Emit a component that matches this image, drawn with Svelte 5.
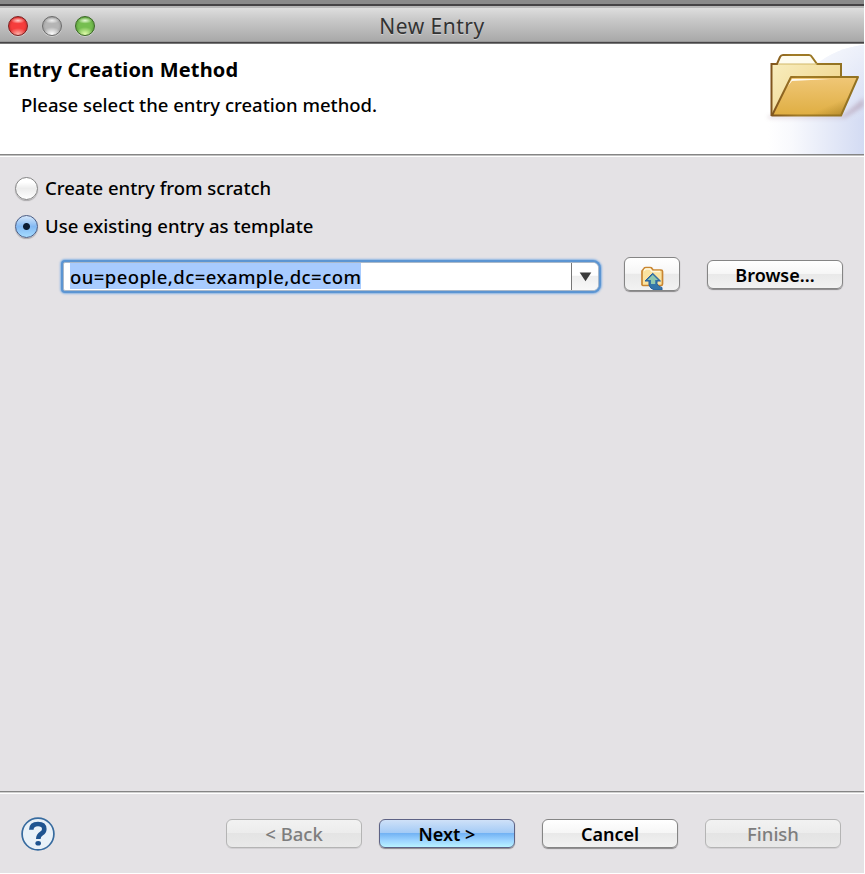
<script>
  let method = 'template';
  let template = 'ou=people,dc=example,dc=com';

  const lights = ['red', 'grey', 'green'];

  const actions = [
    { label: '< Back', state: 'disabled', gap: 17 },
    { label: 'Next >', state: 'primary', gap: 27 },
    { label: 'Cancel', state: '', gap: 27 },
    { label: 'Finish', state: 'disabled', gap: 0 }
  ];
</script>

<div class="window">
  <div class="titlebar">
    <div class="lights">
      {#each lights as color}
        <i class={color}></i>
      {/each}
    </div>
    <span class="title">New Entry</span>
  </div>

  <header>
    <div class="intro">
      <h1>Entry Creation Method</h1>
      <p>Please select the entry creation method.</p>
    </div>
    <svg class="banner" width="124" height="110" viewBox="740 44 124 110">
      <defs>
        <linearGradient id="sky" x1="0" x2="1">
          <stop offset="0" stop-color="#fff" />
          <stop offset=".25" stop-color="#f8f9fd" />
          <stop offset="1" stop-color="#d3dbf3" />
        </linearGradient>
        <linearGradient id="fade" x1="0" y1="0" x2="0" y2="1">
          <stop offset="0" stop-color="#fff" stop-opacity=".6" />
          <stop offset=".7" stop-color="#fff" stop-opacity="0" />
        </linearGradient>
        <linearGradient id="back" x1="0" y1="0" x2="1" y2="1">
          <stop offset="0" stop-color="#f8efc2" />
          <stop offset="1" stop-color="#efd081" />
        </linearGradient>
        <linearGradient id="front" x1="0" y1="0" x2="0" y2="1">
          <stop offset="0" stop-color="#f0c777" />
          <stop offset="1" stop-color="#dfae42" />
        </linearGradient>
        <linearGradient id="corner" x1="0" y1="0" x2="1" y2="1">
          <stop offset=".7" stop-color="#9b771f" stop-opacity="0" />
          <stop offset="1" stop-color="#8a681c" stop-opacity=".75" />
        </linearGradient>
        <linearGradient id="edge" x1="0" y1="0" x2="1" y2="0">
          <stop offset="0" stop-color="#80551e" />
          <stop offset=".3" stop-color="#a17b25" />
          <stop offset="1" stop-color="#927222" />
        </linearGradient>
        <filter id="soft" x="-20%" y="-50%" width="140%" height="200%"><feGaussianBlur stdDeviation="2" /></filter>
      </defs>
      <path d="M768 154V116L814 66Q836 48 864 45V154Z" fill="url(#sky)" />
      <path d="M768 154V116L814 66Q836 48 864 45V154Z" fill="url(#fade)" />
      <path d="M768 116H842L864 98V106L845 118H768Z" fill="#9c788e" opacity=".4" filter="url(#soft)" />
      <path d="M771.500 116V64H777L780 57Q781 55 783 55H809Q811 55 812 57L817 64H841V77" fill="url(#back)" />
      <path d="M777 64L780 57Q781 55 783 55H809Q811 55 812 57L817 64Z" fill="#fefcef" />
      <path d="M771.500 116V64H777L780 57Q781 55 783 55H809Q811 55 812 57L817 64H841V77" fill="none" stroke="url(#edge)" stroke-width="2" />
      <path d="M778 64H817" stroke="#d2b869" stroke-width="1" />
      <path d="M791 77H858L841 115.500H772Z" fill="url(#front)" />
      <path d="M791 77H858L841 115.500H772Z" fill="url(#corner)" />
      <path d="M787 87L792 79H830L792 81Z" fill="#fff" opacity=".9" />
      <path d="M791 77H858L841 115.500H772Z" fill="none" stroke="url(#edge)" stroke-width="2" stroke-linejoin="round" />
    </svg>
  </header>

  <main>
    <label class="option">
      <span class="radio" class:on={method === 'scratch'}></span>
      <span>Create entry from scratch</span>
    </label>
    <label class="option">
      <span class="radio" class:on={method === 'template'}></span>
      <span>Use existing entry as template</span>
    </label>
    <div class="picker">
      <div class="combo">
        <div class="value"><mark>{template}</mark></div>
        <div class="arrow">
          <svg width="13" height="10" viewBox="0 0 13 10"><path d="M.7.5h11.600L6.500 9.300z" fill="#3b3b3b" /></svg>
        </div>
      </div>
      <button class="up" aria-label="Parent">
        <svg width="24" height="24" viewBox="0 0 24 24">
          <path d="M2 19V5L4 2.500Q4.500 1.500 6 1.500H10Q11.500 1.500 12 2.500L13 4H21Q22.500 4 22.500 5.500V18Q22.500 19.500 21 19.500H3Q2 19.500 2 18Z" fill="#fbe3a0" stroke="#c98632" stroke-width="1.700" />
          <path d="M4 5Q5 3 6 3H10L12 5.500H20" fill="none" stroke="#fff8df" stroke-width="1.500" />
          <path d="M12.700 7.300L20.500 15H17V17.500Q17.500 20.500 22 21.500V24H15Q10 23 9 19V15H5Z" fill="#3476aa" stroke="#275f9d" stroke-width="1" />
          <path d="M12.700 8.700L18 14H15.200V18H11V14H7.500Z" fill="#8fc7ad" />
        </svg>
      </button>
      <button>Browse...</button>
    </div>
  </main>

  <footer>
    <svg class="help" width="34" height="34" viewBox="0 0 34 34">
      <circle cx="17" cy="17" r="15.900" fill="#e9f1f8" stroke="#376b9f" stroke-width="1.700" />
      <path d="M10.300 12.800Q10.300 7 17 7Q23.300 7 23.300 12Q23.300 14.800 20.500 16.500Q17.300 18.500 17.300 22" fill="none" stroke="#1f5490" stroke-width="4.600" />
      <ellipse cx="17.200" cy="26.300" rx="2.800" ry="2.300" fill="#1f5490" />
    </svg>
    <div class="actions">
      {#each actions as action}
        <button class={action.state} disabled={action.state === 'disabled'} style="margin-right: {action.gap}px">{action.label}</button>
      {/each}
    </div>
  </footer>
</div>

<style>
  :global(body) {
    margin: 0;
    background: #fff;
  }
  .window {
    box-sizing: border-box;
    width: 864px;
    height: 873px;
    display: flex;
    flex-direction: column;
    background: #e4e2e5;
    color: #000;
    font: 500 18.500px/24px "Noto Sans", sans-serif;
    white-space: nowrap;
  }
  .titlebar {
    box-sizing: border-box;
    height: 44px;
    flex: none;
    display: grid;
    grid-template-columns: 100px 1fr 100px;
    align-items: center;
    padding-top: 8px;
    background: linear-gradient(#8a8a8a 0 4px, #454345 4px 6px, #b8b8b8 6px 8px, #dedede 8px, #c8c8c8 20px, #a9a9a9 41px, #858585 42px, #464446 42px 43px, #777 43px);
  }
  .lights {
    display: flex;
    gap: 13.500px;
    padding-left: 8px;
  }
  i {
    box-sizing: border-box;
    width: 20px;
    height: 20px;
    border-radius: 50%;
    box-shadow: 0 1px 0 rgba(255, 255, 255, .4);
  }
  .red {
    border: 1px solid #7c2020;
    background: radial-gradient(ellipse 7px 3px at 50% 20%, #ffd0cc, transparent), radial-gradient(ellipse 9px 6px at 50% 95%, #ffb0a8, transparent), radial-gradient(circle, #f63d3c 50%, #a92422);
  }
  .grey {
    border: 1px solid #6b6b6b;
    background: radial-gradient(ellipse 7px 3px at 50% 20%, #eee, transparent), radial-gradient(ellipse 9px 7px at 50% 95%, #fff, transparent), radial-gradient(circle, #b5b5b5 50%, #888);
  }
  .green {
    border: 1px solid #3b6826;
    background: radial-gradient(ellipse 7px 3px at 50% 20%, #e5f8d6, transparent), radial-gradient(ellipse 9px 7px at 50% 95%, #e4ffad, transparent), radial-gradient(circle, #75be50 50%, #447f2a);
  }
  .title {
    justify-self: center;
    font-size: 21px;
    font-weight: 400;
    letter-spacing: .5px;
    color: #333;
    text-shadow: 0 1px 0 rgba(255, 255, 255, .4);
  }
  header {
    height: 110px;
    flex: none;
    display: flex;
    justify-content: space-between;
    background: #fff;
    border-bottom: 1px solid #858585;
    box-shadow: 0 1px 0 #c0c0c0, 0 2px 0 #fff;
  }
  .intro {
    padding: 14px 0 0 8px;
  }
  h1 {
    margin: 0;
    font-size: 20px;
    line-height: 24px;
    font-weight: 700;
    letter-spacing: .17px;
  }
  p {
    margin: 11px 0 0 13px;
  }
  main {
    flex: 1;
    padding: 21px 0 0 15px;
  }
  .option {
    display: flex;
    align-items: center;
    height: 24px;
    margin-bottom: 14px;
    gap: 7px;
  }
  .radio {
    box-sizing: border-box;
    width: 23px;
    height: 23px;
    border: 1px solid #858585;
    border-radius: 50%;
    background: linear-gradient(#fff 20%, #ececec 50%, #fff);
    box-shadow: 0 1px 1px rgba(0, 0, 0, .25);
  }
  .radio.on {
    border-color: #4b5c83;
    background: radial-gradient(circle, #0a1c33 3px, transparent 4px), linear-gradient(#d6e8fb, #83b9f3 50%, #a5dcff);
  }
  .picker {
    display: flex;
    align-items: flex-start;
    padding: 8px 0 0 48px;
  }
  .combo {
    box-sizing: border-box;
    width: 536px;
    height: 29px;
    margin-top: 2px;
    display: flex;
    border-radius: 2px 6px 6px 2px;
    background: #fff;
    box-shadow: 0 0 0 2px #5c95d2, 0 0 2px 3px #8ab4e3;
    border: 1px solid #aab9ca;
  }
  .value {
    flex: 1;
    padding: 0 0 0 6px;
  }
  mark {
    display: inline-block;
    height: 26px;
    line-height: 27px;
    letter-spacing: .43px;
    background: #a8cbfe;
    color: #000;
  }
  .arrow {
    width: 26px;
    display: flex;
    align-items: center;
    justify-content: center;
    border-left: 1px solid #777;
    background: linear-gradient(#fff 45%, #efefef 50%, #f8f8f8);
    border-radius: 0 5px 5px 0;
  }
  button {
    box-sizing: border-box;
    width: 136px;
    height: 29px;
    padding: 0;
    border: 1px solid #858585;
    border-radius: 6px;
    background: linear-gradient(#fff, #f6f6f6 48%, #e9e9e9 50%, #f2f2f2);
    box-shadow: 0 1px 1px rgba(0, 0, 0, .4);
    color: #000;
    font: 600 18px/26px "Noto Sans", sans-serif;
  }
  .up {
    width: 56px;
    height: 34px;
    margin: -3px 27px 0 25px;
    display: flex;
    align-items: flex-end;
    justify-content: center;
  }
  .disabled {
    border-color: #b4b4b4;
    background: linear-gradient(#f2f2f2, #ececec 48%, #e4e4e4 50%, #e9e9e9);
    box-shadow: 0 1px 0 rgba(0, 0, 0, .08);
    color: #7d7d7d;
    font-weight: 500;
    font-size: 18.500px;
  }
  .primary {
    border-color: #5d6285;
    background: linear-gradient(#cfe1f8, #a4cbf6 47%, #73b3f4 50%, #9bd3ff 75%, #b8f3ff);
  }
  footer {
    height: 81px;
    flex: none;
    display: flex;
    justify-content: space-between;
    border-top: 1px solid #858585;
    box-shadow: inset 0 1px 0 #d0d0d0, inset 0 2px 0 #fff;
  }
  .help {
    margin: 25px 0 0 21px;
  }
  .actions {
    display: flex;
    padding: 27px 23px 0 0;
  }
</style>
